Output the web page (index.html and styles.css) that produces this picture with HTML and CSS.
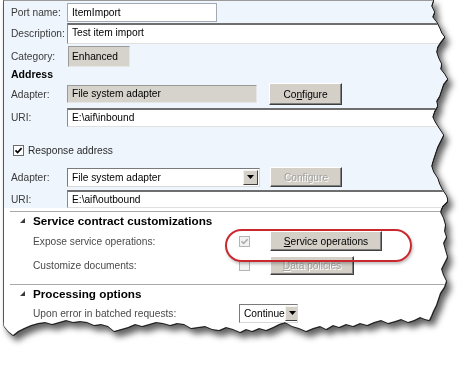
FILE: index.html
```html
<!DOCTYPE html>
<html lang="en">
<head>
<meta charset="utf-8">
<title>Port</title>
<link rel="stylesheet" href="styles.css">
</head>
<body>
<div class="sheet">
  <div class="paper">
    <div class="top">
      <div class="row r-port">
        <span class="lbl">Port name:</span>
        <div class="field f-port">ItemImport</div>
      </div>
      <div class="row r-desc">
        <span class="lbl">Description:</span>
        <div class="field wide">Test item import</div>
      </div>
      <div class="row r-cat">
        <span class="lbl">Category:</span>
        <div class="field ro f-cat">Enhanced</div>
      </div>
      <div class="group">Address</div>
      <div class="row r-adapter">
        <span class="lbl">Adapter:</span>
        <div class="field ro f-adapter">File system adapter</div>
        <button class="btn b-conf">Co<u>n</u>figure</button>
      </div>
      <div class="row r-uri">
        <span class="lbl">URI:</span>
        <div class="field wide">E:\aif\inbound</div>
      </div>
      <div class="row r-resp">
        <span class="cb"><svg viewBox="0 0 9 9" width="9" height="9"><path d="M1.5 4.3 L3.6 6.5 L7.6 2.2" fill="none" stroke="currentColor" stroke-width="1.7"/></svg></span>
        <span class="cb-text">Response address</span>
      </div>
      <div class="row r-adapter2">
        <span class="lbl">Adapter:</span>
        <div class="field combo f-combo"><span class="combo-text">File system adapter</span><span class="dd"><svg viewBox="0 0 7 4" width="7" height="4"><path d="M0 0H7L3.5 4Z" fill="#000"/></svg></span></div>
        <button class="btn dis b-conf2">Configure</button>
      </div>
      <div class="row r-uri2">
        <span class="lbl">URI:</span>
        <div class="field wide">E:\aif\outbound</div>
      </div>
    </div>
    <section class="sec sec-svc">
      <div class="shead"><svg class="tri" viewBox="0 0 5 5" width="5" height="5"><path d="M5 0V5H0Z" fill="#3a3a3a"/></svg>Service contract customizations</div>
      <div class="srow">
        <span class="slbl">Expose service operations:</span>
        <span class="cb dis"><svg viewBox="0 0 9 9" width="9" height="9"><path d="M1.5 4.3 L3.6 6.5 L7.6 2.2" fill="none" stroke="currentColor" stroke-width="1.5"/></svg></span>
        <button class="btn b-svc"><u>S</u>ervice operations</button>
      </div>
      <div class="srow">
        <span class="slbl">Customize documents:</span>
        <span class="cb dis"></span>
        <button class="btn dis b-data"><u>D</u>ata policies</button>
      </div>
    </section>
    <section class="sec sec-proc">
      <div class="shead"><svg class="tri" viewBox="0 0 5 5" width="5" height="5"><path d="M5 0V5H0Z" fill="#3a3a3a"/></svg>Processing options</div>
      <div class="srow srow-last">
        <span class="slbl">Upon error in batched requests:</span>
        <div class="field combo f-cont"><span class="combo-text">Continue</span><span class="dd"><svg viewBox="0 0 7 4" width="7" height="4"><path d="M0 0H7L3.5 4Z" fill="#000"/></svg></span></div>
      </div>
    </section>
    <div class="ring"></div>
  </div>
</div>
</body>
</html>
```

FILE: styles.css
```css
* { box-sizing: border-box; margin: 0; padding: 0; }

body {
  margin: 0;
  background: #fff;
  font-family: "Liberation Sans", Arial, sans-serif;
  font-size: 10.2px;
  color: #3a3a3a;
}

.sheet {
  width: 474px;
  height: 365px;
  padding-left: 3px;
  filter: drop-shadow(1px 0 0 #222) drop-shadow(0 1px 0 #222) drop-shadow(4px 5px 3px rgba(0, 0, 0, 0.62));
}

.paper {
  position: relative;
  width: 452px;
  height: 340px;
  background: #fff;
  border-left: 1px solid #555;
  border-top: 1px solid #9a9a9a;
  clip-path: polygon(0 0, 430px 0, 428px 6px, 431px 12px, 429px 17px, 433px 22px, 436px 28px, 438px 33px, 441px 37px, 437px 42px, 434px 47px, 433px 52px, 435px 58px, 438px 64px, 437px 69px, 441px 74px, 444px 79px, 440px 84px, 438px 90px, 436px 96px, 433px 101px, 434px 106px, 431px 111px, 429px 117px, 432px 123px, 436px 129px, 440px 135px, 437px 141px, 434px 147px, 432px 153px, 430px 159px, 428px 166px, 430px 172px, 434px 178px, 436px 184px, 439px 190px, 443px 196px, 444px 201px, 439px 206px, 437px 212px, 440px 218px, 442px 225px, 441px 231px, 443px 237px, 440px 243px, 442px 250px, 444px 257px, 441px 263px, 438px 269px, 440px 275px, 443px 281px, 441px 287px, 437px 293px, 435px 299px, 433px 305px, 430px 311px, 428px 316px, 426px 320px, 422px 319px, 417px 317px, 411px 320px, 405px 322px, 398px 319px, 392px 321px, 385px 323px, 378px 320px, 371px 322px, 364px 325px, 357px 323px, 350px 326px, 343px 324px, 336px 327px, 330px 325px, 323px 329px, 317px 326px, 310px 328px, 303px 331px, 296px 328px, 289px 326px, 282px 322px, 276px 324px, 270px 327px, 263px 330px, 256px 328px, 249px 331px, 243px 329px, 237px 332px, 230px 329px, 223px 327px, 216px 330px, 209px 329px, 202px 326px, 195px 327px, 188px 328px, 181px 324px, 174px 323px, 167px 325px, 160px 323px, 153px 322px, 146px 324px, 139px 326px, 132px 324px, 125px 327px, 118px 329px, 111px 331px, 105px 326px, 98px 324px, 91px 325px, 84px 322px, 77px 321px, 70px 322px, 63px 320px, 56px 322px, 49px 324px, 42px 322px, 35px 323px, 28px 325px, 21px 328px, 15px 331px, 10px 335px, 5px 331px, 1px 326px, 0 322px);
}

/* ---------- top (address) area ---------- */
.top {
  background: #eef5fd;
  padding-left: 7px;
}

.row {
  display: flex;
  align-items: center;
}

.lbl {
  flex: none;
  width: 56px;
  white-space: nowrap;
}

.r-port { height: 22px; }
.r-desc { height: 21px; }
.r-cat { height: 25px; }
.r-adapter { height: 28px; }
.r-uri { height: 19px; }
.r-resp { height: 20px; margin-top: 13px; }
.r-adapter2 { height: 30px; padding-top: 4px; }
.r-uri2 { height: 18px; }

.group {
  height: 11px;
  line-height: 11px;
  font-weight: bold;
  font-size: 10.5px;
  color: #000;
}

.field {
  flex: none;
  height: 19px;
  background: #fff;
  border: 1px solid #a3aab3;
  padding: 0 4px;
  line-height: 17px;
  color: #000;
  white-space: nowrap;
  overflow: hidden;
}

.f-port { width: 150px; }

.wide {
  flex: 1;
  height: 100%;
  border: none;
  border-top: 2px solid #6e6e6e;
  border-left: 1px solid #8a8a8a;
  border-bottom: 1px solid #e0e0e0;
  line-height: 15px;
}

.ro {
  background: #d6d3cc;
  border-color: #9a9a9a #e6e6e6 #e6e6e6 #9a9a9a;
}

.f-cat {
  width: 62px;
  height: 21px;
  line-height: 19px;
  margin-left: 1px;
  padding-left: 3px;
}

.f-adapter {
  width: 190px;
  height: 18px;
  line-height: 16px;
}

.combo {
  display: flex;
  align-items: center;
  justify-content: space-between;
  padding: 0 1px 0 4px;
  border-color: #7a7a7a #d8d8d8 #d8d8d8 #7a7a7a;
}

.f-combo { width: 193px; }

.dd {
  flex: none;
  width: 15px;
  height: 15px;
  background: #d4d0c8;
  border: 1px solid;
  border-color: #f4f4f4 #404040 #404040 #f4f4f4;
  display: flex;
  align-items: center;
  justify-content: center;
}

.dd svg { display: block; }

/* ---------- buttons ---------- */
.btn {
  flex: none;
  font: inherit;
  color: #000;
  background: #d4d0c8;
  border: 1px solid;
  border-color: #fff #404040 #404040 #fff;
  box-shadow: inset -1px -1px 0 #808080;
  padding: 0;
  text-align: center;
}

.btn.dis {
  color: #a2a2a2;
  text-shadow: 1px 1px 0 #fff;
}

.b-conf { width: 73px; height: 22px; margin-left: 12px; }
.b-conf2 { width: 72px; height: 20px; margin-left: 10px; }
.b-svc { width: 112px; height: 20px; margin-left: 20px; }
.b-data { width: 84px; height: 19px; margin-left: 20px; }

/* ---------- checkboxes ---------- */
.cb {
  flex: none;
  width: 11px;
  height: 11px;
  border: 1px solid #6a6a6a;
  background: #fff;
  color: #000;
  display: flex;
  align-items: center;
  justify-content: center;
}

.cb svg { display: block; }

.r-resp .cb { margin-left: 2px; }

.cb-text { margin-left: 4px; color: #2a2a2a; }

.cb.dis {
  border-color: #b4b4b4;
  background: #f2f2f2;
  color: #a8a8a8;
}

/* ---------- sections ---------- */
.sec {
  margin-left: 6px;
  border-top: 1px solid #a8a8a8;
}

.sec-svc { margin-top: 3px; }
.sec-proc { margin-top: 7px; }

.shead {
  height: 17px;
  display: flex;
  align-items: center;
  padding-left: 10px;
  font-weight: bold;
  font-size: 11.7px;
  color: #000;
}

.tri { flex: none; margin-right: 8px; display: block; }

.srow {
  height: 24px;
  display: flex;
  align-items: center;
  padding-left: 23px;
  color: #4a4a4a;
}

.srow-last { height: 22px; }

.slbl {
  flex: none;
  width: 206px;
  white-space: nowrap;
}

.f-cont { width: 59px; }

/* ---------- highlight ring ---------- */
.ring {
  position: absolute;
  left: 221px;
  top: 228px;
  width: 187px;
  height: 33px;
  border: 2px solid #c8282e;
  border-radius: 17px;
  box-shadow: 1px 2px 3px rgba(0, 0, 0, 0.25);
}
```
